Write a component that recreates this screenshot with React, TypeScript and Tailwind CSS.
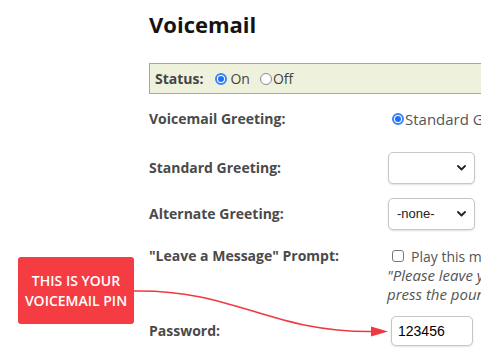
import React from 'react';

function Radio({ checked }: { checked?: boolean }) {
  if (checked) {
    return (
      <span className="flex h-[12px] w-[12px] shrink-0 items-center justify-center rounded-full border-2 border-[#3b83f7] bg-white">
        <span className="h-[6px] w-[6px] rounded-full bg-[#1f6ff2]" />
      </span>
    );
  }
  return <span className="h-[12px] w-[12px] shrink-0 rounded-full border border-[#8a8a8a] bg-white" />;
}

function Chevron() {
  return (
    <svg width="9" height="6" viewBox="0 0 9 6" className="shrink-0">
      <path d="M1 1 L4.5 4.5 L8 1" fill="none" stroke="#222" strokeWidth="1.8" strokeLinecap="round" strokeLinejoin="round" />
    </svg>
  );
}

function Select({ value, className }: { value?: string; className?: string }) {
  return (
    <div
      className={`flex w-[87px] items-center justify-between rounded-[5px] border border-[#c6c6c6] bg-white pl-[8px] pr-[8px] shadow-[0_1px_2px_rgba(0,0,0,0.12)] ${className ?? ''}`}
    >
      <span className="font-['Liberation_Sans',Arial,sans-serif] text-[13px] text-[#222]">{value ?? ''}</span>
      <Chevron />
    </div>
  );
}

function Label({ children }: { children: React.ReactNode }) {
  return <div className="w-[239px] shrink-0 text-[14px] font-bold leading-[20px] text-[#4a4a4a]">{children}</div>;
}

export default function App() {
  return (
    <div className="relative h-[361px] w-[481px] overflow-hidden bg-white font-['Open_Sans',sans-serif]">
      <div className="flex flex-col pl-[149px] pt-[9px]">
        <h1 className="text-[22px] font-bold leading-[30px] text-[#141414]">Voicemail</h1>

        <div className="mt-[24px] flex h-[31px] w-[360px] items-center gap-[12px] border border-[#a6a6a6] bg-[#eef2dd] pl-[5px] text-[14px] leading-[20px]">
          <span className="font-bold text-[#444]">Status:</span>
          <span className="flex items-center gap-[3px] text-[#444]">
            <Radio checked />
            On
          </span>
          <span className="-ml-[2px] flex items-center gap-[1px] text-[#444]">
            <Radio />
            Off
          </span>
        </div>

        <div className="mt-[10px] flex h-[30px] items-center">
          <Label>Voicemail Greeting:</Label>
          <span className="ml-[4px] flex items-center gap-[1px] whitespace-nowrap text-[15px] text-[#555]">
            <Radio checked />
            Standard Greeting
          </span>
        </div>

        <div className="mt-[18px] flex h-[32px] items-center">
          <Label>Standard Greeting:</Label>
          <Select className="h-[32px]" />
        </div>

        <div className="mt-[14px] flex h-[32px] items-center">
          <Label>Alternate Greeting:</Label>
          <Select className="h-[32px]" value="-none-" />
        </div>

        <div className="mt-[16px] flex items-start">
          <Label>"Leave a Message" Prompt:</Label>
          <div className="flex flex-col">
            <span className="ml-[4px] flex h-[20px] items-center gap-[7px] whitespace-nowrap text-[14px] text-[#555]">
              <span className="h-[12px] w-[12px] shrink-0 rounded-[3px] border border-[#777] bg-white" />
              Play this message before the beep
            </span>
            <span className="-ml-[1px] whitespace-nowrap text-[15px] italic leading-[19px] text-[#555]">
              "Please leave your message after the tone. When finished,
            </span>
            <span className="-ml-[1px] whitespace-nowrap text-[15px] italic leading-[19px] text-[#555]">
              press the pound key for more options."
            </span>
          </div>
        </div>

        <div className="mt-[12px] flex h-[30px] items-center">
          <Label>Password:</Label>
          <div className="ml-[3px] flex h-[30px] w-[82px] items-center rounded-[5px] border border-[#c6c6c6] bg-white pl-[6px] shadow-[0_1px_2px_rgba(0,0,0,0.12)]">
            <span className="font-['Liberation_Sans',Arial,sans-serif] text-[14px] text-black">123456</span>
          </div>
        </div>
      </div>

      {/* annotation */}
      <svg className="pointer-events-none absolute left-0 top-0" width="481" height="361" viewBox="0 0 481 361">
        <path d="M133 291 C 235 289, 270 333, 374 331.5" fill="none" stroke="#f0383f" strokeWidth="1.5" />
        <polygon points="371,326.5 388,331.5 371,336.5" fill="#f0383f" />
      </svg>
      <div className="absolute left-[18px] top-[257px] flex h-[67px] w-[116px] flex-col items-center justify-center rounded-[3px] bg-[#f53c43] text-[14px] font-semibold leading-[20px] text-white">
        <span>THIS IS YOUR</span>
        <span>VOICEMAIL PIN</span>
      </div>
    </div>
  );
}
